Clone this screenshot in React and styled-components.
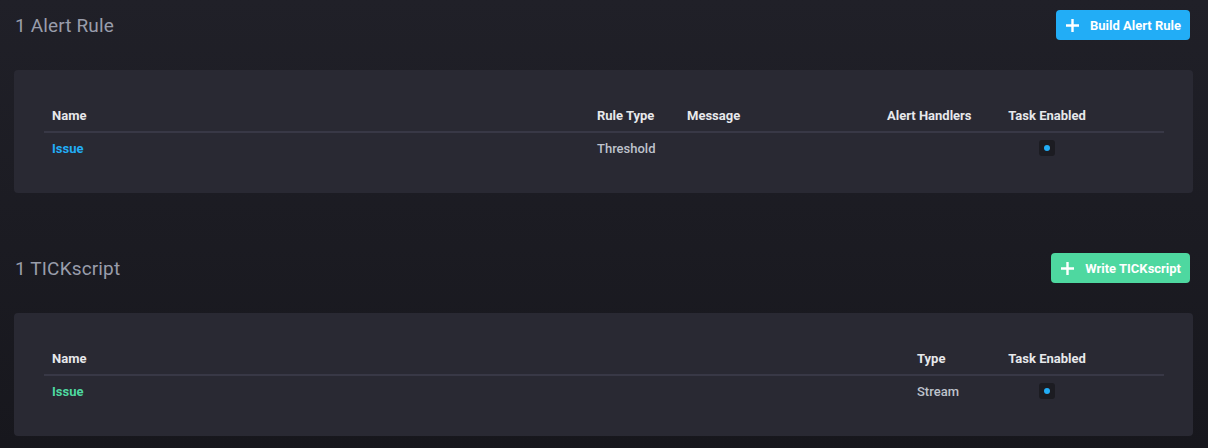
import React from 'react'
import styled, { createGlobalStyle } from 'styled-components'

const GlobalStyle = createGlobalStyle`
  html, body {
    margin: 0;
    padding: 0;
    height: 100%;
  }
  body {
    background: linear-gradient(to bottom, #202028 0%, #17171d 100%);
    font-family: Roboto, "Liberation Sans", sans-serif;
    -webkit-font-smoothing: antialiased;
  }
`

const Page = styled.div`
  width: 1208px;
  height: 448px;
  padding: 0 15px 0 14px;
  box-sizing: border-box;
  display: flex;
  flex-direction: column;
  gap: 50px;
`

const Section = styled.section`
  display: flex;
  flex-direction: column;
`

const SectionHeader = styled.div`
  height: 50px;
  display: flex;
  align-items: center;
  justify-content: space-between;
  padding: 0 3px 0 1px;
  margin-bottom: 20px;
`

const Title = styled.h2`
  margin: 0;
  font-size: 19px;
  font-weight: 400;
  color: #999dab;
  letter-spacing: 0.15px;
`

const Button = styled.button`
  display: flex;
  align-items: center;
  gap: 10px;
  height: 30px;
  padding: 0 9px 0 9px;
  border: none;
  border-radius: 4px;
  background: ${p => p.$color};
  color: #fff;
  font-family: Roboto, "Liberation Sans", sans-serif;
  font-size: 13px;
  font-weight: 700;
  cursor: pointer;
`

const Panel = styled.div`
  background: #292933;
  border-radius: 4px;
  padding: 30px 29px 30px 30px;
`

const Table = styled.table`
  width: 100%;
  border-collapse: collapse;
  table-layout: fixed;
`

const Th = styled.th`
  height: 31px;
  padding: 0 8px;
  text-align: ${p => (p.$center ? 'center' : 'left')};
  font-size: 13px;
  font-weight: 700;
  color: #e7e8eb;
  border-bottom: 2px solid #383846;
  vertical-align: middle;
`

const Td = styled.td`
  height: 30px;
  padding: 0 8px;
  text-align: ${p => (p.$center ? 'center' : 'left')};
  font-size: 13px;
  font-weight: 500;
  color: #bec2cc;
  vertical-align: middle;
`

const NameLink = styled.a`
  color: ${p => p.$color};
  font-weight: 700;
  text-decoration: none;
`

const Toggle = styled.span`
  display: inline-flex;
  align-items: center;
  justify-content: center;
  width: 16px;
  height: 16px;
  border-radius: 3px;
  background: #1c1c22;
  vertical-align: middle;
  &::after {
    content: '';
    width: 6px;
    height: 6px;
    border-radius: 50%;
    background: #22adf6;
  }
`

const Plus = () => (
  <svg width="15" height="15" viewBox="0 0 15 15">
    <path d="M7.5 1v13M1 7.5h13" stroke="#fff" strokeWidth="2.4" />
  </svg>
)

export default function App() {
  return (
    <>
      <GlobalStyle />
      <Page>
        <Section>
          <SectionHeader>
            <Title>1 Alert Rule</Title>
            <Button $color="#22adf6">
              <Plus />
              Build Alert Rule
            </Button>
          </SectionHeader>
          <Panel>
            <Table>
              <colgroup>
                <col style={{ width: 545 }} />
                <col style={{ width: 90 }} />
                <col style={{ width: 200 }} />
                <col style={{ width: 121 }} />
                <col style={{ width: 94 }} />
                <col />
              </colgroup>
              <thead>
                <tr>
                  <Th>Name</Th>
                  <Th>Rule Type</Th>
                  <Th>Message</Th>
                  <Th>Alert Handlers</Th>
                  <Th $center>Task Enabled</Th>
                  <Th />
                </tr>
              </thead>
              <tbody>
                <tr>
                  <Td><NameLink $color="#22adf6">Issue</NameLink></Td>
                  <Td>Threshold</Td>
                  <Td />
                  <Td />
                  <Td $center><Toggle /></Td>
                  <Td />
                </tr>
              </tbody>
            </Table>
          </Panel>
        </Section>
        <Section>
          <SectionHeader>
            <Title>1 TICKscript</Title>
            <Button $color="#4ed8a0">
              <Plus />
              Write TICKscript
            </Button>
          </SectionHeader>
          <Panel>
            <Table>
              <colgroup>
                <col style={{ width: 865 }} />
                <col style={{ width: 91 }} />
                <col style={{ width: 94 }} />
                <col />
              </colgroup>
              <thead>
                <tr>
                  <Th>Name</Th>
                  <Th>Type</Th>
                  <Th $center>Task Enabled</Th>
                  <Th />
                </tr>
              </thead>
              <tbody>
                <tr>
                  <Td><NameLink $color="#4ed8a0">Issue</NameLink></Td>
                  <Td>Stream</Td>
                  <Td $center><Toggle /></Td>
                  <Td />
                </tr>
              </tbody>
            </Table>
          </Panel>
        </Section>
      </Page>
    </>
  )
}
